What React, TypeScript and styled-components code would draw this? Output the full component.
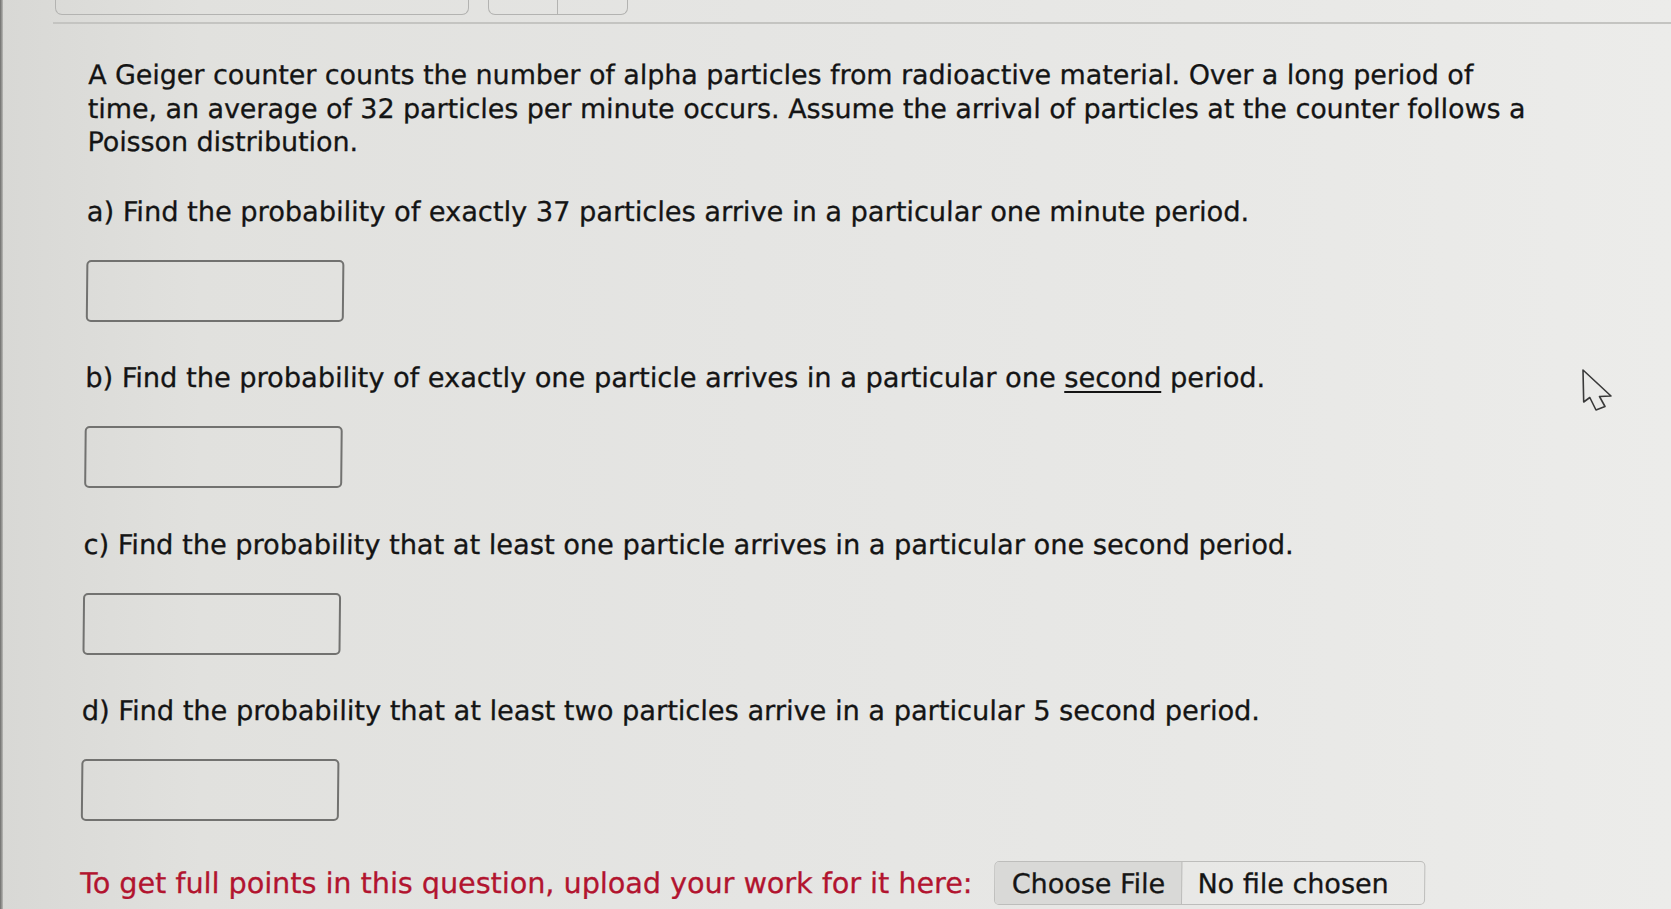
import styled, { createGlobalStyle } from "styled-components";

const GlobalStyle = createGlobalStyle`
  html, body {
    margin: 0;
    padding: 0;
    background: #e4e4e2;
  }
`;

const QUESTIONS = [
  { id: "a", text: "Find the probability of exactly 37 particles arrive in a particular one minute period." },
  { id: "b", text: "Find the probability of exactly one particle arrives in a particular one ", em: "second", tail: " period." },
  { id: "c", text: "Find the probability that at least one particle arrives in a particular one second period." },
  { id: "d", text: "Find the probability that at least two particles arrive in a particular 5 second period." },
];

const App = () => {
  return (
    <>
      <GlobalStyle />
      <Page>
        <Bezel />
        <Main>
          <TopBar>
            <Tab $width={414} />
            <Segmented>
              <Segment $width={68} />
              <Segment $width={69} />
            </Segmented>
          </TopBar>
          <Rule />
          <Content>
            <Intro>
              A Geiger counter counts the number of alpha particles from radioactive material. Over a long period of
              <br />
              time, an average of 32 particles per minute occurs. Assume the arrival of particles at the counter follows a
              <br />
              Poisson distribution.
            </Intro>
            {QUESTIONS.map((q) => (
              <Question key={q.id}>
                <Prompt>
                  {q.id}) {q.text}
                  {q.em && <u>{q.em}</u>}
                  {q.tail}
                </Prompt>
                <AnswerBox type="text" aria-label={`answer ${q.id}`} />
              </Question>
            ))}
            <UploadRow>
              <UploadLabel>To get full points in this question, upload your work for it here:</UploadLabel>
              <FileControl>
                <ChooseButton type="button">Choose File</ChooseButton>
                <FileName>No file chosen</FileName>
              </FileControl>
            </UploadRow>
          </Content>
        </Main>
        <Cursor width="34" height="46" viewBox="-2 -2 34 46">
          <path
            d="M0 0 L0.7 32 L6.8 27.5 L13 40 L22 36.5 L16.5 26.5 L28 26 Z"
            fill="#ebebe9"
            stroke="#3a3a3a"
            strokeWidth="1.6"
            strokeLinejoin="round"
          />
        </Cursor>
      </Page>
    </>
  );
};

const Page = styled.div`
  position: relative;
  display: flex;
  width: 1671px;
  height: 909px;
  overflow: hidden;
  background: linear-gradient(90deg, #d8d8d5 0%, #e1e1de 12%, #e5e5e3 45%, #e9e9e7 80%, #ececea 100%);
  font-family: "DejaVu Sans", Verdana, sans-serif;
  color: #141414;
  -webkit-text-stroke: 0.3px currentColor;
`;

const Bezel = styled.div`
  width: 3px;
  flex-shrink: 0;
  background: linear-gradient(90deg, #6d6d6b, #b9b9b6);
`;

const Main = styled.div`
  flex: 1;
  display: flex;
  flex-direction: column;
  min-height: 0;
`;

const TopBar = styled.div`
  display: flex;
  flex-shrink: 0;
  gap: 19px;
  padding-left: 52px;
  height: 15px;
`;

const Tab = styled.div<{ $width: number }>`
  width: ${(p) => p.$width}px;
  height: 100%;
  box-sizing: border-box;
  border: 1.5px solid #b3b3b1;
  border-top: none;
  border-radius: 0 0 7px 7px;
`;

const Segmented = styled.div`
  display: flex;
  height: 100%;
  box-sizing: border-box;
  border: 1.5px solid #b3b3b1;
  border-top: none;
  border-radius: 0 0 7px 7px;
`;

const Segment = styled.div<{ $width: number }>`
  width: ${(p) => p.$width}px;
  & + & {
    border-left: 1.5px solid #b3b3b1;
  }
`;

const Rule = styled.div`
  flex-shrink: 0;
  margin: 7px 0 0 50px;
  height: 1.5px;
  background: #c4c4c1;
`;

const Content = styled.div`
  flex-shrink: 0;
  padding: 34px 0 0 85px;
  transform: skewX(-0.57deg);
  transform-origin: 0 75px;
`;

const Intro = styled.p`
  margin: 0;
  font-size: 26.85px;
  line-height: 33.5px;
  white-space: nowrap;
`;

const Question = styled.div`
  display: flex;
  flex-direction: column;
  align-items: flex-start;
  &:first-of-type {
    margin-top: 36px;
  }
  & + & {
    margin-top: 39.5px;
  }
`;

const Prompt = styled.div`
  font-size: 27.2px;
  line-height: 34px;
  white-space: nowrap;
  u {
    text-underline-offset: 4px;
    text-decoration-thickness: 1.5px;
  }
`;

const AnswerBox = styled.input`
  margin-top: 31px;
  width: 258px;
  height: 62px;
  box-sizing: border-box;
  border: 2px solid #727270;
  border-radius: 5px;
  background: transparent;
  padding: 0 10px;
  font: inherit;
  outline: none;
`;

const UploadRow = styled.div`
  display: flex;
  align-items: center;
  gap: 22px;
  margin-top: 40px;
`;

const UploadLabel = styled.span`
  font-size: 28.6px;
  color: #b2142f;
  white-space: nowrap;
`;

const FileControl = styled.div`
  display: flex;
  height: 44px;
  box-sizing: border-box;
  border: 1.5px solid #bdbdbb;
  border-radius: 5px;
  overflow: hidden;
`;

const ChooseButton = styled.button`
  width: 187px;
  border: none;
  border-right: 1.5px solid #bdbdbb;
  background: #d9d9d7;
  font-family: inherit;
  font-size: 27px;
  color: #151515;
  -webkit-text-stroke: 0.3px currentColor;
  padding: 0;
`;

const FileName = styled.span`
  display: flex;
  align-items: center;
  width: 242px;
  padding-left: 15px;
  box-sizing: border-box;
  font-size: 27px;
  color: #151515;
  white-space: nowrap;
`;

const Cursor = styled.svg`
  position: absolute;
  left: 1581px;
  top: 368px;
`;

export default App;
